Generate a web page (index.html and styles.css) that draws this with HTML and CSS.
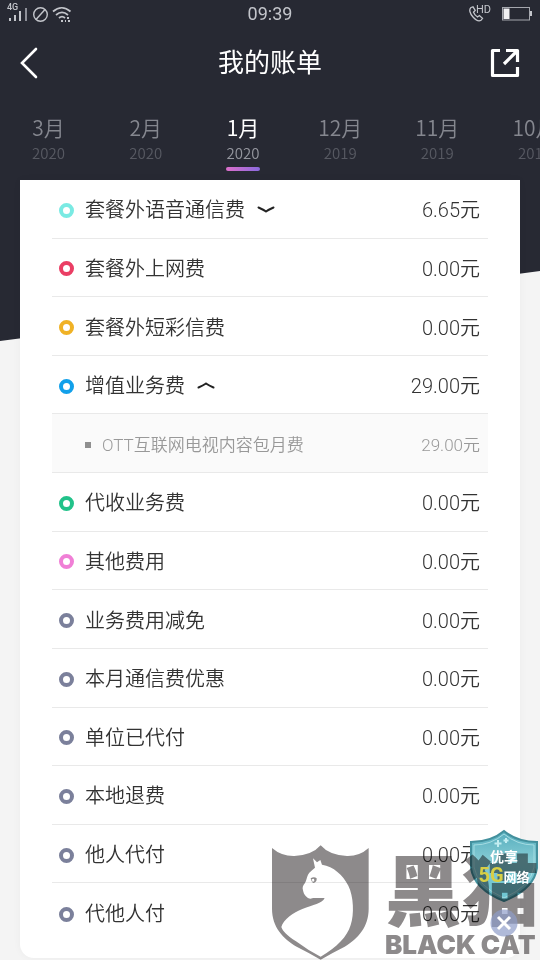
FILE: index.html
```html
<!DOCTYPE html>
<html lang="zh-CN">
<head>
    <meta charset="UTF-8">
    <meta name="viewport" content="width=device-width, initial-scale=1.0">
    <title>我的账单</title>
    <link rel="stylesheet" href="styles.css">
</head>
<body>
    <header class="top">
        <div class="status">
            <div class="status-left">
                <svg width="66" height="18" viewBox="0 0 66 18" fill="none" stroke="#c3c5cb">
                    <path d="M2 13v3M7 10v6M12 6v10" stroke-width="2"/>
                    <path d="M18 3v13" stroke="#8d8f98" stroke-width="2"/>
                    <circle cx="32.500" cy="9.500" r="6.800" stroke-width="1.400"/>
                    <path d="M28 14.500l9-10" stroke-width="1.400"/>
                    <path d="M45 6.500c5.500-5 12-5 17.500 0M48 10c4-3.500 8-3.500 12 0M51 13c2-1.800 4-1.800 6 0" stroke-width="1.700"/>
                    <path d="M53 16h2M60 12v2M61 15v2M57 16h1" stroke-width="2"/>
                </svg>
                <span class="net">4G</span>
            </div>
            <time class="clock">09:39</time>
            <div class="status-right">
                <svg width="16" height="18" viewBox="0 0 16 18" fill="none" stroke="#c3c5cb" stroke-width="1.300">
                    <path d="M3 2.500l2-.7 2.200 3.700-1.700 1.700c.8 2 2 3.500 4 4.700l1.900-1.400 3.100 2.800-1.500 2c-2.200 1.300-5.300-.2-8-3.300C2 8.700.6 4.500 3 2.500z"/>
                </svg>
                <span class="hd">HD</span>
                <svg width="30" height="14" viewBox="0 0 30 14">
                    <rect x=".500" y=".500" width="27" height="12.500" fill="none" stroke="#a5a7ae"/>
                    <rect x="1.500" y="1.500" width="6" height="10.500" fill="#f1f1f3"/>
                    <rect x="28" y="4" width="2" height="5" fill="#c3c5cb"/>
                </svg>
            </div>
        </div>
        <div class="bar">
            <button class="icon-btn" aria-label="返回">
                <svg width="18" height="32" viewBox="0 0 18 32" fill="none" stroke="#fff" stroke-width="2.600" stroke-linecap="round">
                    <path d="M16 2L2 16l14 14"/>
                </svg>
            </button>
            <h1>我的账单</h1>
            <button class="icon-btn" aria-label="分享">
                <svg width="30" height="30" viewBox="0 0 30 30" fill="none" stroke="#fff" stroke-width="3.200">
                    <path d="M10 2.500H2.500v25h25V19M16 2.500h11.500V14M26.500 3.500L14 16" stroke-linejoin="round"/>
                </svg>
            </button>
        </div>
        <nav class="months">
            <a href="#">3月<small>2020</small></a>
            <a href="#">2月<small>2020</small></a>
            <a href="#" class="active">1月<small>2020</small></a>
            <a href="#">12月<small>2019</small></a>
            <a href="#">11月<small>2019</small></a>
            <a href="#">10月<small>2019</small></a>
        </nav>
    </header>

    <main class="card">
        <ul class="bill">
            <li>
                <i class="dot cyan"></i>
                <button class="toggle" aria-expanded="false">套餐外语音通信费
                    <svg width="18" height="8" viewBox="0 0 18 8"><path d="M1.500 1.500Q6 3.500 9 5.500Q12 3.500 16.500 1.500"/></svg>
                </button>
                <b>6.65元</b>
            </li>
            <li><i class="dot red"></i><span>套餐外上网费</span><b>0.00元</b></li>
            <li><i class="dot yellow"></i><span>套餐外短彩信费</span><b>0.00元</b></li>
            <li>
                <i class="dot blue"></i>
                <button class="toggle" aria-expanded="true">增值业务费
                    <svg width="18" height="8" viewBox="0 0 18 8"><path d="M1.500 5.500Q6 3.500 9 1.500Q12 3.500 16.500 5.500"/></svg>
                </button>
                <b>29.00元</b>
            </li>
            <li class="sub"><i class="square"></i><span>OTT互联网电视内容包月费</span><b>29.00元</b></li>
            <li><i class="dot green"></i><span>代收业务费</span><b>0.00元</b></li>
            <li><i class="dot pink"></i><span>其他费用</span><b>0.00元</b></li>
            <li><i class="dot"></i><span>业务费用减免</span><b>0.00元</b></li>
            <li><i class="dot"></i><span>本月通信费优惠</span><b>0.00元</b></li>
            <li><i class="dot"></i><span>单位已代付</span><b>0.00元</b></li>
            <li><i class="dot"></i><span>本地退费</span><b>0.00元</b></li>
            <li><i class="dot"></i><span>他人代付</span><b>0.00元</b></li>
            <li><i class="dot"></i><span>代他人付</span><b>0.00元</b></li>
        </ul>
    </main>

    <aside class="promo">
        <a href="#" class="promo-badge">
            <svg width="70" height="74" viewBox="0 0 70 74">
                <defs>
                    <linearGradient id="teal" x1="0" y1="0" x2="0" y2="1">
                        <stop offset="0" stop-color="#55adbd"/>
                        <stop offset=".4" stop-color="#83cad3"/>
                        <stop offset="1" stop-color="#6cc5d2"/>
                    </linearGradient>
                </defs>
                <path d="M35 2Q48 13 68 13V39Q65 60 35 72Q5 60 2 39V13Q22 13 35 2z" fill="url(#teal)" stroke="#43909d" stroke-width="2"/>
                <path d="M35 5Q48 16 65 16V38Q62 57 35 69Q8 57 5 38V16Q22 16 35 5z" fill="none" stroke="#a4dce2"/>
                <path d="M29 11v7M25.500 14.500h7M37 9v5M34.500 11.500h5" stroke="#c2edf1" stroke-width="2"/>
            </svg>
            <span class="promo-top">优享</span>
            <span class="promo-main"><em>5G</em>网络</span>
        </a>
        <button class="promo-close" aria-label="关闭">
            <svg width="28" height="28" viewBox="0 0 28 28">
                <circle cx="14" cy="14" r="13.500" fill="#8f9cc9" fill-opacity=".7"/>
                <path d="M8 8l12 12M20 8L8 20" stroke="#fff" stroke-width="3"/>
            </svg>
        </button>
    </aside>

    <div class="watermark">
        <svg width="97" height="115" viewBox="34 74 291 345">
            <path fill="#8d8a8b" fill-rule="evenodd" d="M34 83Q63 108 101 107Q154 105 180 75Q206 105 259 107Q296 108 324 83V265C324 320 292 354 252 379Q212 399 180 418Q148 399 108 379C67 354 34 320 34 265z
                M157 114L169 126L179 119L184 133C219 139 246 163 263 196C279 228 281 282 270 314C259 350 230 379 180 409Q143 391 106 363C79 345 66 333 62 320C68 297 98 277 125 266C158 253 184 250 192 233C178 234 160 232 150 235C139 235 129 223 127 210C124 201 127 195 133 188C137 182 138 172 142 163C146 155 157 147 163 142z"/>
            <path d="M150 174Q160 168 168 174Q169 187 157 188Q152 184 150 174z" fill="#8d8a8b"/>
            <path d="M153 177l7-2 1 7-5 3z" fill="#fff"/>
        </svg>
        <div class="watermark-text">
            <strong>黑猫</strong>
            <span>BLACK CAT</span>
        </div>
    </div>
</body>
</html>
```

FILE: styles.css
```css
* {
    box-sizing: border-box;
}
body {
    position: relative;
    display: flex;
    flex-direction: column;
    min-height: 100vh;
    margin: 0;
    overflow-x: hidden;
    background: #f4f4f4;
    color: #333;
    font-family: Roboto, "Noto Sans CJK SC", sans-serif;
    font-weight: 350;
}
/* slanted dark backdrop */
body::before {
    content: "";
    position: absolute;
    top: 0;
    left: 0;
    right: 0;
    height: 341px;
    background: #272933;
    clip-path: polygon(0 0, 100% 0, 100% 271px, 0 100%);
}
button {
    padding: 0;
    border: 0;
    background: none;
    color: inherit;
    font: inherit;
    cursor: pointer;
}
a {
    color: inherit;
    text-decoration: none;
}
svg {
    display: block;
}

.top {
    position: relative;
    height: 180px;
    color: #fff;
}
.status {
    display: grid;
    grid-template-columns: 1fr auto 1fr;
    align-items: center;
    height: 28px;
    padding: 0 8px;
    color: #c3c5cb;
}
.status-left {
    position: relative;
}
.net {
    position: absolute;
    top: -2px;
    left: -1px;
    font-size: 9px;
    line-height: 8px;
    font-weight: 500;
}
.clock {
    font-size: 18px;
    line-height: 28px;
    font-weight: 400;
}
.status-right {
    display: flex;
    justify-content: flex-end;
    align-items: center;
}
.hd {
    margin: -8px 11px 0 -8px;
    font-size: 11px;
    line-height: 12px;
    font-weight: 400;
}
.bar {
    display: flex;
    justify-content: space-between;
    align-items: center;
    height: 70px;
    padding: 0 20px;
}
.icon-btn {
    display: flex;
    width: 30px;
}
h1 {
    margin: 0;
    font-size: 26px;
    line-height: 36px;
    font-weight: 400;
}
.months {
    display: flex;
    height: 82px;
    padding-top: 15px;
    overflow: hidden;
    font-family: "Noto Sans CJK SC", sans-serif;
}
.months a {
    position: relative;
    flex: 0 0 18%;
    color: #85878f;
    font-size: 21px;
    line-height: 28px;
    text-align: center;
}
.months small {
    display: block;
    color: #575962;
    font-size: 15px;
    line-height: 24px;
}
.months .active {
    color: #fff;
    font-weight: 400;
}
.months .active small {
    color: #94969e;
    font-weight: 350;
}
.months .active::after {
    content: "";
    position: absolute;
    top: 54px;
    left: 50%;
    width: 34px;
    height: 4px;
    margin-left: -17px;
    border-radius: 2px;
    background: linear-gradient(to right, #dc6fca, #8a6ade);
}

.card {
    position: relative;
    display: flex;
    flex: 1;
    margin: 0 20px 2px;
    padding: 0 32px 16px;
    background: #fff;
    border-radius: 0 0 14px 14px;
    box-shadow: 0 0 8px rgba(0, 0, 0, 0.04);
}
.bill {
    display: grid;
    flex: 1;
    grid-auto-rows: 1fr;
    margin: 0;
    padding: 0;
    list-style: none;
}
.bill li {
    display: flex;
    align-items: center;
    padding: 3px 8px 0 7px;
    border-bottom: 1px solid #e9e9e9;
    font-size: 20px;
    line-height: 28px;
}
.bill li:last-child {
    border-bottom: 0;
}
.bill b {
    margin-left: auto;
    font-weight: 350;
}
.dot {
    width: 15px;
    height: 15px;
    margin-right: 11px;
    border: 4px solid #7b809b;
    border-radius: 50%;
}
.cyan { border-color: #7aeae3; }
.red { border-color: #ea3e64; }
.yellow { border-color: #f0b226; }
.blue { border-color: #12a0ea; }
.green { border-color: #22c28a; }
.pink { border-color: #f07fd6; }
.toggle {
    display: flex;
    align-items: center;
    gap: 12px;
}
.toggle path {
    fill: none;
    stroke: #222;
    stroke-width: 2;
    stroke-linecap: round;
}
.bill .sub {
    padding-left: 33px;
    background: #fafafa;
    color: #999;
    font-size: 17px;
}
.square {
    width: 6px;
    height: 6px;
    margin-right: 11px;
    background: #8f8f8f;
}

/* floating promo */
.promo {
    position: absolute;
    right: 1px;
    bottom: 23px;
    width: 70px;
}
.promo-badge {
    position: relative;
    display: block;
    color: #fff;
    text-align: center;
    font-weight: 700;
}
.promo-top,
.promo-main {
    position: absolute;
    z-index: 2;
    left: 0;
    width: 100%;
    white-space: nowrap;
}
.promo-top {
    top: 18px;
    font-size: 14px;
    line-height: 20px;
}
.promo-main {
    top: 36px;
    font-size: 13px;
    line-height: 20px;
}
.promo-main em {
    color: #d8cf45;
    font-size: 20px;
    font-style: normal;
}
.promo-close {
    position: relative;
    z-index: 2;
    display: block;
    margin: 6px auto 0;
}

.watermark {
    position: absolute;
    z-index: 1;
    right: 0;
    bottom: 0;
    display: flex;
    gap: 16px;
    color: #8d8a8b;
    mix-blend-mode: multiply;
    pointer-events: none;
}
.watermark-text {
    display: flex;
    flex-direction: column;
    width: 155px;
    white-space: nowrap;
}
.watermark-text strong {
    font-family: "Noto Sans CJK SC", sans-serif;
    font-size: 77px;
    line-height: 84px;
    font-weight: 900;
}
.watermark-text span {
    font-family: Inter, sans-serif;
    font-size: 26px;
    line-height: 31px;
    font-weight: 900;
}
```
